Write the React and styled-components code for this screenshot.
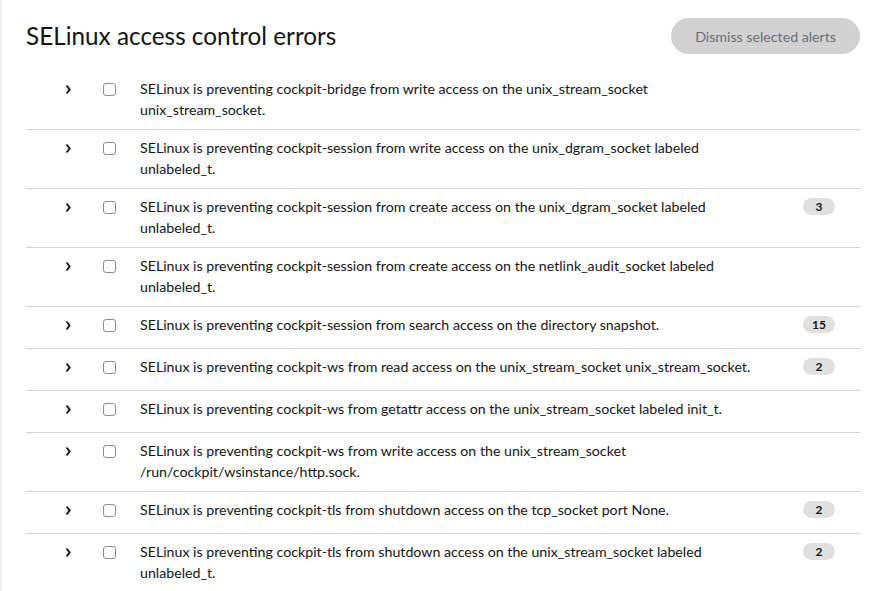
import React from "react";
import styled, { createGlobalStyle } from "styled-components";

const Global = createGlobalStyle`
  html, body { margin: 0; padding: 0; background: #fff; }
  body { font-family: "Lato", "Open Sans", sans-serif; color: #151515; }
  * { box-sizing: border-box; }
`;

const Page = styled.div`
  border-left: 2px solid #f0f0f0;
  min-height: 591px;
  padding: 18px 13px 0 24px;
`;

const Header = styled.header`
  display: flex;
  align-items: center;
  justify-content: space-between;
  height: 36px;
  margin-bottom: 17px;
`;

const Title = styled.h2`
  margin: 0;
  font-family: "Lato", "Open Sans", sans-serif;
  font-weight: 400;
  font-size: 24.3px;
  line-height: 36px;
  color: #151515;
`;

const DismissButton = styled.button`
  height: 36px;
  padding: 0 24px;
  border: none;
  border-radius: 18px;
  background: #d2d2d2;
  color: #6a6e73;
  font-family: inherit;
  font-size: 14.2px;
`;

const List = styled.ul`
  list-style: none;
  margin: 0;
  padding: 0;
`;

const Row = styled.li`
  display: flex;
  align-items: flex-start;
  padding: 8px 25px 8px 24px;
  border-bottom: ${(p) => (p.$last ? "none" : "1px solid #d2d2d2")};
`;

const Toggle = styled.button`
  width: 36px;
  height: 21px;
  margin-right: 17px;
  padding: 0;
  border: none;
  background: none;
  display: flex;
  align-items: center;
  justify-content: center;
  color: #151515;
`;

const CheckCell = styled.div`
  height: 21px;
  display: flex;
  align-items: center;
  margin-right: 24px;
`;

const Check = styled.span`
  width: 13px;
  height: 13px;
  border: 1px solid #8a8d90;
  border-radius: 3px;
  background: #fff;
`;

const Message = styled.div`
  flex: 1;
  min-height: 25px;
  font-size: 14.2px;
  line-height: 21px;
  margin-top: -1px;
  margin-bottom: 1px;
`;

const Line = styled.span`
  display: block;
  white-space: nowrap;
`;

const Badge = styled.span`
  margin-top: 1px;
  min-width: 32px;
  height: 17px;
  padding: 0 8px;
  border-radius: 9px;
  background: #e0e0e0;
  color: #151515;
  font-size: 12px;
  font-weight: 700;
  line-height: 17px;
  text-align: center;
`;

const Chevron = () => (
  <svg width="6" height="9" viewBox="0 0 6 9" aria-hidden="true">
    <path d="M0.6 0.4 L2.8 0.4 L5.8 4.5 L2.8 8.6 L0.6 8.6 L3.4 4.5 Z" fill="currentColor" />
  </svg>
);

const alerts = [
  { lines: ["SELinux is preventing cockpit-bridge from write access on the unix_stream_socket", "unix_stream_socket."] },
  { lines: ["SELinux is preventing cockpit-session from write access on the unix_dgram_socket labeled", "unlabeled_t."] },
  { lines: ["SELinux is preventing cockpit-session from create access on the unix_dgram_socket labeled", "unlabeled_t."], count: 3 },
  { lines: ["SELinux is preventing cockpit-session from create access on the netlink_audit_socket labeled", "unlabeled_t."] },
  { lines: ["SELinux is preventing cockpit-session from search access on the directory snapshot."], count: 15 },
  { lines: ["SELinux is preventing cockpit-ws from read access on the unix_stream_socket unix_stream_socket."], count: 2 },
  { lines: ["SELinux is preventing cockpit-ws from getattr access on the unix_stream_socket labeled init_t."] },
  { lines: ["SELinux is preventing cockpit-ws from write access on the unix_stream_socket", "/run/cockpit/wsinstance/http.sock."] },
  { lines: ["SELinux is preventing cockpit-tls from shutdown access on the tcp_socket port None."], count: 2 },
  { lines: ["SELinux is preventing cockpit-tls from shutdown access on the unix_stream_socket labeled", "unlabeled_t."], count: 2 },
];

export default function App() {
  return (
    <>
      <Global />
      <Page>
        <Header>
          <Title>SELinux access control errors</Title>
          <DismissButton disabled>Dismiss selected alerts</DismissButton>
        </Header>
        <List>
          {alerts.map((a, i) => (
            <Row key={i} $last={i === alerts.length - 1}>
              <Toggle aria-label="Details">
                <Chevron />
              </Toggle>
              <CheckCell>
                <Check />
              </CheckCell>
              <Message>
                {a.lines.map((l, j) => (
                  <Line key={j}>{l}</Line>
                ))}
              </Message>
              {a.count ? <Badge>{a.count}</Badge> : null}
            </Row>
          ))}
        </List>
      </Page>
    </>
  );
}
